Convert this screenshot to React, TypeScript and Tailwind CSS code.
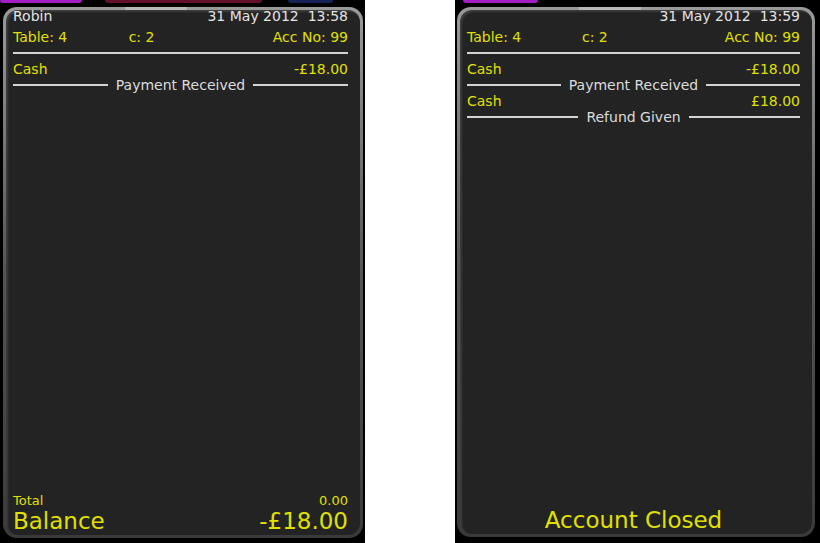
import React from "react";

const font = { fontFamily: '"DejaVu Sans", "Liberation Sans", sans-serif' };

function Rule({ label }: { label: string }) {
  return (
    <div className="flex items-center gap-[8px] h-[16px]">
      <div className="flex-1 h-[2px] bg-[#d4d4d4]" />
      <span className="text-[#dcdcdc] text-[14px] leading-none">{label}</span>
      <div className="flex-1 h-[2px] bg-[#d4d4d4]" />
    </div>
  );
}

function Row({ left, right }: { left: string; right: string }) {
  return (
    <div className="flex justify-between items-center h-[16px] text-[#e0e000] text-[14px] leading-none">
      <span>{left}</span>
      <span>{right}</span>
    </div>
  );
}

function Card({ children }: { children: React.ReactNode }) {
  return (
    <div className="relative h-full rounded-[14px] bg-gradient-to-b from-[#9a9a9a] via-[#555] to-[#3a3a3a] p-[3px]">
      <div className="h-full rounded-[12px] bg-[#232323] shadow-[inset_2px_2px_2px_rgba(255,255,255,0.12)] flex flex-col pl-[7px] pr-[12px]">
        {children}
      </div>
      <div className="absolute top-0 left-[122px] w-[62px] h-[3px] bg-[#b8b8b8]" />
    </div>
  );
}

function Header({ name, time }: { name: string; time: string }) {
  return (
    <>
      <div className="flex justify-between items-center h-[12px] text-[#e4e4e4] text-[14px] leading-none">
        <span>{name}</span>
        <span className="whitespace-pre">{`31 May 2012  ${time}`}</span>
      </div>
      <div className="grid grid-cols-3 items-center h-[30px] text-[#e0e000] text-[14px] leading-none">
        <span>Table: 4</span>
        <span className="pl-[4px]">c: 2</span>
        <span className="text-right">Acc No: 99</span>
      </div>
      <div className="h-[9px]">
        <div className="w-full h-[2px] bg-[#d4d4d4]" />
      </div>
    </>
  );
}

export default function App() {
  return (
    <div className="w-[820px] h-[543px] bg-white flex" style={font}>
      {/* open account */}
      <div className="relative w-[365px] h-full bg-black pl-[3px] pr-[2px] pt-[7px] pb-[5px]">
        <div className="absolute top-0 left-0 w-[82px] h-[3px] rounded-b-[6px] bg-[#a41cc4]" />
        <div className="absolute top-0 left-[105px] w-[157px] h-[3px] rounded-b-[6px] bg-[#62102e]" />
        <div className="absolute top-0 left-[288px] w-[45px] h-[3px] rounded-b-[6px] bg-[#14225a]" />
        <Card>
          <Header name="Robin" time="13:58" />
          <Row left="Cash" right="-£18.00" />
          <Rule label="Payment Received" />
          <div className="flex-1" />
          <div className="flex justify-between items-center text-[#e0e000] text-[13px] leading-none h-[14px]">
            <span>Total</span>
            <span>0.00</span>
          </div>
          <div className="flex justify-between items-center text-[#e0e000] text-[23px] leading-none h-[28px]">
            <span>Balance</span>
            <span>-£18.00</span>
          </div>
        </Card>
      </div>
      <div className="flex-1" />
      {/* closed account */}
      <div className="relative w-[365px] h-full bg-black pl-[2px] pr-[5px] pt-[7px] pb-[6px]">
        <div className="absolute top-0 left-[8px] w-[75px] h-[3px] rounded-b-[6px] bg-[#a41cc4]" />
        <Card>
          <Header name="" time="13:59" />
          <Row left="Cash" right="-£18.00" />
          <Rule label="Payment Received" />
          <Row left="Cash" right="£18.00" />
          <Rule label="Refund Given" />
          <div className="flex-1" />
          <div className="flex items-center justify-center text-[#e0e000] text-[23px] leading-none h-[28px]">
            Account Closed
          </div>
        </Card>
      </div>
    </div>
  );
}
